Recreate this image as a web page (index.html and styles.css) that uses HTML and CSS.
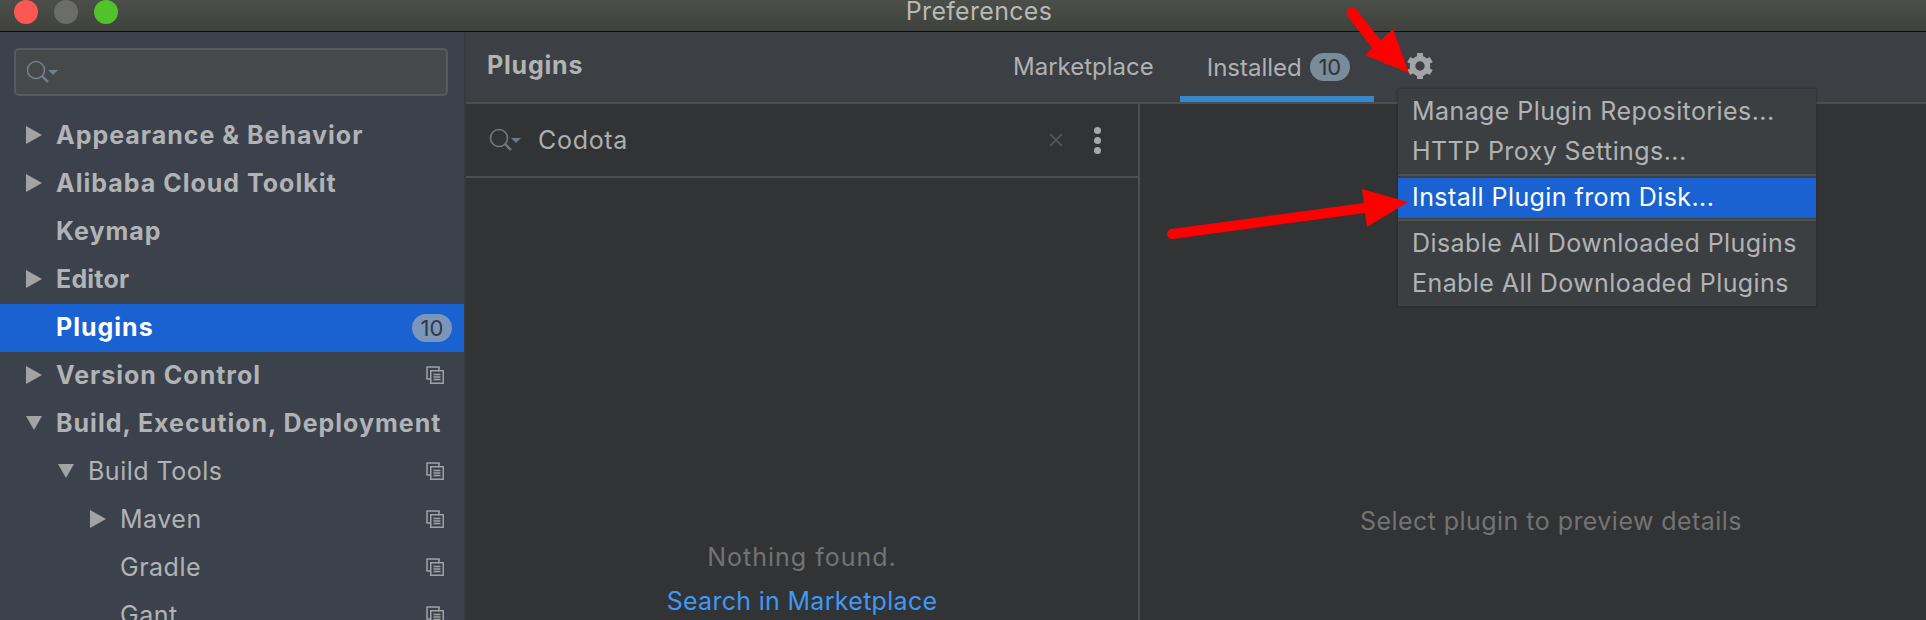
FILE: index.html
```html
<!DOCTYPE html>
<html lang="en">
<head>
<meta charset="utf-8">
<title>Preferences</title>
<link rel="stylesheet" href="styles.css">
</head>
<body>
<svg class="defs" width="0" height="0">
  <symbol id="copy" viewBox="0 0 18 18">
    <path d="M4 13H1V1h12v3" fill="none" stroke="currentColor" stroke-width="1.5"/>
    <rect x="4.75" y="4.75" width="12.5" height="12.5" fill="none" stroke="currentColor" stroke-width="1.5"/>
    <path d="M7.5 8.5h7M7.5 11h7M7.5 13.5h7" stroke="currentColor" stroke-width="1.3"/>
  </symbol>
  <symbol id="search" viewBox="0 0 33 24">
    <circle cx="10" cy="10" r="8.5" fill="none" stroke="currentColor" stroke-width="1.6"/>
    <path d="M16 16l6 6" stroke="currentColor" stroke-width="2.4"/>
    <path d="M22 10h10l-5 5z" fill="currentColor"/>
  </symbol>
  <symbol id="right" viewBox="0 0 16 18"><path d="M0 0l16 9L0 18z" fill="currentColor"/></symbol>
  <symbol id="down" viewBox="0 0 18 16"><path d="M0 0h18L9 16z" fill="currentColor"/></symbol>
</svg>
<div class="window">
  <header class="titlebar">
    <div class="lights">
      <span class="light red"></span>
      <span class="light grey"></span>
      <span class="light green"></span>
    </div>
    <div class="wintitle">Preferences</div>
  </header>
  <div class="main">
    <aside class="sidebar">
      <div class="sidesearch"><svg class="searchicon"><use href="#search"/></svg></div>
      <ul class="tree">
        <li class="row bold l1"><svg class="tri"><use href="#right"/></svg><span>Appearance &amp; Behavior</span></li>
        <li class="row bold l1"><svg class="tri"><use href="#right"/></svg><span>Alibaba Cloud Toolkit</span></li>
        <li class="row bold l1"><span class="notri"></span><span>Keymap</span></li>
        <li class="row bold l1"><svg class="tri"><use href="#right"/></svg><span class="snug">Editor</span></li>
        <li class="row bold l1 selected"><span class="notri"></span><span>Plugins</span><span class="count">10</span></li>
        <li class="row bold l1"><svg class="tri"><use href="#right"/></svg><span>Version Control</span><svg class="copy"><use href="#copy"/></svg></li>
        <li class="row bold l1"><svg class="tri"><use href="#down"/></svg><span>Build, Execution, Deployment</span></li>
        <li class="row l2"><svg class="tri"><use href="#down"/></svg><span>Build Tools</span><svg class="copy"><use href="#copy"/></svg></li>
        <li class="row l3"><svg class="tri"><use href="#right"/></svg><span>Maven</span><svg class="copy"><use href="#copy"/></svg></li>
        <li class="row l3"><span class="notri"></span><span>Gradle</span><svg class="copy"><use href="#copy"/></svg></li>
        <li class="row l3"><span class="notri"></span><span>Gant</span><svg class="copy"><use href="#copy"/></svg></li>
      </ul>
    </aside>
    <section class="content">
      <div class="topbar">
        <h1 class="heading">Plugins</h1>
        <nav class="tabs">
          <div class="tab">Marketplace</div>
          <div class="tab active">Installed<span class="tabcount">10</span></div>
          <svg class="gear" viewBox="0 0 26 26">
            <circle cx="13" cy="13" r="7.5" fill="none" stroke="currentColor" stroke-width="5.6"/>
            <g fill="currentColor">
              <rect x="10" y="0" width="6" height="5"/>
              <rect x="10" y="0" width="6" height="5" transform="rotate(60 13 13)"/>
              <rect x="10" y="0" width="6" height="5" transform="rotate(120 13 13)"/>
              <rect x="10" y="0" width="6" height="5" transform="rotate(180 13 13)"/>
              <rect x="10" y="0" width="6" height="5" transform="rotate(240 13 13)"/>
              <rect x="10" y="0" width="6" height="5" transform="rotate(300 13 13)"/>
            </g>
          </svg>
        </nav>
      </div>
      <div class="panes">
        <div class="listpane">
          <div class="filter">
            <svg class="filtericon"><use href="#search"/></svg>
            <span class="query">Codota</span>
            <svg class="clear" viewBox="0 0 14 14"><path d="M1 1l12 12M13 1L1 13" stroke="currentColor" stroke-width="1.4"/></svg>
            <span class="dots"><i></i><i></i><i></i></span>
          </div>
          <div class="empty">
            <div class="nothing">Nothing found.</div>
            <div class="link">Search in Marketplace</div>
          </div>
        </div>
        <div class="detailpane">Select plugin to preview details</div>
      </div>
    </section>
  </div>
</div>
<ul class="menu">
  <li class="item">Manage Plugin Repositories...</li>
  <li class="item">HTTP Proxy Settings...</li>
  <li class="sep"></li>
  <li class="item hot">Install Plugin from Disk...</li>
  <li class="sep tight"></li>
  <li class="item">Disable All Downloaded Plugins</li>
  <li class="item">Enable All Downloaded Plugins</li>
</ul>
<svg class="arrows" viewBox="0 0 1926 620">
  <path d="M1352 13L1388 59" stroke="#ff0000" stroke-width="11" stroke-linecap="round"/>
  <path d="M1409 73L1393 29L1365 55z" fill="#ff0000"/>
  <path d="M1172 234L1372 207" stroke="#ff0000" stroke-width="10" stroke-linecap="round"/>
  <path d="M1408 202L1362 189L1367 227z" fill="#ff0000"/>
</svg>
</body>
</html>
```

FILE: styles.css
```css
* { box-sizing: border-box; }
html, body {
  margin: 0;
  height: 620px;
  overflow: hidden;
  background: #323335;
  font-family: Inter, "Liberation Sans", sans-serif;
  font-size: 25px;
}
ul { list-style: none; margin: 0; padding: 0; }
.defs { position: absolute; }

.window { display: flex; flex-direction: column; height: 620px; }

.titlebar {
  height: 32px;
  flex: none;
  display: flex;
  align-items: center;
  position: relative;
  background: linear-gradient(#4b4e49, #3f413d);
  border-bottom: 1px solid #0c0c0c;
  overflow: hidden;
}
.lights { display: flex; gap: 16px; padding-left: 14px; margin-top: -7px; }
.light { width: 24px; height: 24px; border-radius: 50%; }
.red { background: #fd5754; }
.grey { background: #6c6d6b; }
.green { background: #52c22b; }
.wintitle {
  position: absolute;
  left: 32px;
  right: 0;
  top: 0;
  text-align: center;
  line-height: 22px;
  color: #b8b9b6;
  font-size: 25px;
  letter-spacing: .3px;
}

.main { flex: 1; display: flex; min-height: 0; }

.sidebar {
  width: 464px;
  flex: none;
  background: #3c424c;
  padding-top: 16px;
  overflow: hidden;
}
.sidesearch {
  width: 434px;
  height: 48px;
  margin-left: 14px;
  display: flex;
  align-items: center;
  padding-left: 10px;
  background: #45494a;
  border: 2px solid #585b5e;
  border-radius: 5px;
}
.searchicon { width: 33px; height: 24px; color: #71808e; }
.tree { margin-top: 15px; }
.row {
  height: 48px;
  display: flex;
  align-items: center;
  color: #b2b3b5;
  white-space: nowrap;
  padding-right: 20px;
  position: relative;
  letter-spacing: .5px;
}
.row.bold { font-weight: 700; letter-spacing: 1px; }
.row.bold .snug { letter-spacing: .2px; }
.row.l1 { padding-left: 26px; }
.row.l2 { padding-left: 58px; }
.row.l3 { padding-left: 90px; }
.tri, .notri { width: 16px; height: 18px; flex: none; margin-right: 14px; color: #a2a3a5; }
.selected {
  background: #1a62d1;
  margin-top: 1px;
  margin-bottom: -1px;
  padding-bottom: 2px;
}
.row.selected { color: #fff; }
.count {
  margin-left: auto;
  margin-right: -8px;
  margin-top: 2px;
  min-width: 40px;
  height: 28px;
  border-radius: 14px;
  background: #7a96b9;
  color: #2f3a48;
  font-weight: 400;
  font-size: 22px;
  letter-spacing: 0;
  line-height: 28px;
  text-align: center;
}
.copy { width: 18px; height: 18px; margin-left: auto; flex: none; color: #a0a3a6; }

.content { flex: 1; display: flex; flex-direction: column; min-width: 0; border-left: 2px solid #37393c; }
.topbar {
  height: 72px;
  flex: none;
  display: flex;
  align-items: center;
  position: relative;
  background: #3c3f43;
  border-bottom: 2px solid #4c4e50;
  padding-left: 21px;
}
.heading {
  margin: 0 0 4px;
  width: 526px;
  font-size: 25px;
  font-weight: 700;
  letter-spacing: .8px;
  color: #b2b3b5;
}
.tabs { display: flex; align-items: center; height: 70px; }
.tab {
  display: flex;
  align-items: center;
  height: 70px;
  color: #b0b1b3;
  font-size: 24px;
  padding-bottom: 2px;
}
.tab.active {
  margin-left: 26px;
  width: 194px;
  padding-left: 27px;
  border-bottom: 6px solid #3788c9;
  padding-top: 6px;
  padding-bottom: 0;
}
.tabcount {
  margin-left: 8px;
  width: 40px;
  height: 28px;
  border-radius: 14px;
  background: #7a8b99;
  color: #2e343a;
  font-size: 22px;
  line-height: 28px;
  text-align: center;
}
.gear { width: 26px; height: 26px; margin-left: 33px; margin-bottom: 2px; color: #a2a4a6; }

.panes { flex: 1; display: flex; min-height: 0; background: #323335; }
.listpane { width: 674px; flex: none; border-right: 2px solid #4c4e50; display: flex; flex-direction: column; }
.filter {
  height: 74px;
  flex: none;
  display: flex;
  align-items: center;
  padding-left: 23px;
  border-bottom: 2px solid #4c4e50;
}
.filtericon { width: 33px; height: 24px; color: #6d7a86; }
.query { margin-left: 16px; color: #aeafb1; letter-spacing: .7px; }
.clear { width: 14px; height: 14px; margin-left: auto; color: #59616a; }
.dots { display: flex; flex-direction: column; gap: 3px; margin-left: 31px; margin-right: 37px; }
.dots i { width: 7px; height: 7px; border-radius: 50%; background: #a6a8aa; }
.empty { text-align: center; padding-top: 364px; }
.nothing { color: #737373; line-height: 30px; letter-spacing: 1px; }
.link { color: #3d99f5; line-height: 30px; margin-top: 14px; letter-spacing: .3px; }
.detailpane { flex: 1; padding: 402px 0 0 36px; text-align: center; color: #737373; line-height: 30px; letter-spacing: .45px; }

.menu {
  position: absolute;
  left: 1398px;
  top: 89px;
  width: 418px;
  height: 217px;
  padding-top: 2px;
  background: #3c3f42;
  box-shadow: 0 0 2px #222;
}
.item {
  height: 40px;
  display: flex;
  align-items: center;
  padding-left: 14px;
  color: #b2b3b5;
  white-space: nowrap;
  letter-spacing: .42px;
}
.item.hot { background: #1a62d1; color: #fff; padding-bottom: 2px; }
.sep { height: 5px; border-top: 2px solid #4e5052; margin-top: 3px; margin-bottom: -1px; }
.sep.tight { margin-top: 1px; }

.arrows { position: absolute; left: 0; top: 0; width: 1926px; height: 620px; pointer-events: none; }
```
